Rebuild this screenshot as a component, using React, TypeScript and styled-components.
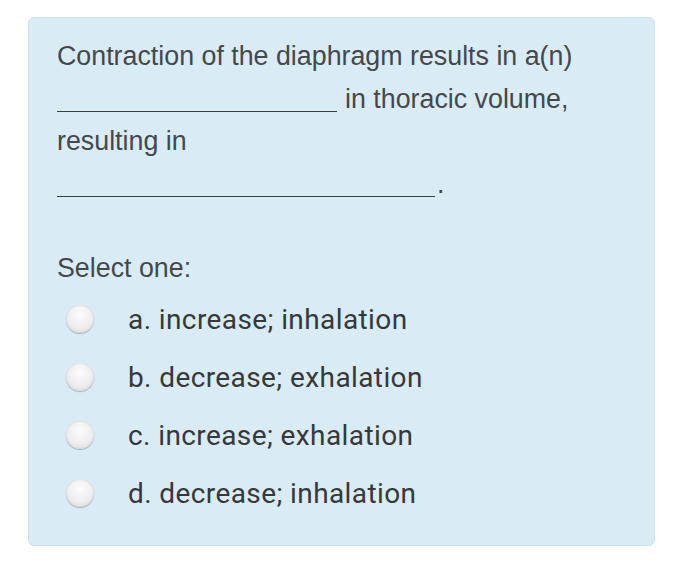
import * as React from "react";
import styled, { createGlobalStyle } from "styled-components";

const GlobalStyle = createGlobalStyle`
  html, body {
    margin: 0;
    padding: 0;
    background: #ffffff;
  }
  body {
    font-family: "Liberation Sans", Arial, sans-serif;
  }
`;

const Page = styled.div`
  width: 700px;
  height: 575px;
  padding: 17px 45px 0 28px;
  box-sizing: border-box;
`;

const Card = styled.div`
  width: 627px;
  height: 529px;
  box-sizing: border-box;
  background: #d9ecf5;
  border: 1px solid #c8e3ee;
  border-radius: 6px;
  padding: 17px 28px 0 28px;
  color: #45484b;
`;

const QuestionText = styled.div`
  font-size: 26.8px;
  line-height: 42.5px;
  white-space: nowrap;
`;

const Blank = styled.span<{ width: number }>`
  display: inline-block;
  width: ${p => p.width}px;
  border-bottom: 1.5px solid #3b3d3f;
  height: 1px;
  vertical-align: -4px;
  margin-right: ${p => (p.width > 300 ? 2 : 8)}px;
`;

const Prompt = styled.div`
  margin-top: 42px;
  font-size: 26.8px;
  line-height: 42px;
`;

const Options = styled.div`
  display: flex;
  flex-direction: column;
  margin-top: 1px;
`;

const Option = styled.label`
  display: flex;
  align-items: center;
  height: 58px;
  padding-left: 9px;
  font-family: Roboto, "Liberation Sans", sans-serif;
  font-size: 28px;
  letter-spacing: 0.4px;
  color: #36383a;
`;

const Radio = styled.span`
  width: 28px;
  height: 28px;
  border-radius: 50%;
  background: radial-gradient(circle at 50% 35%, #fbfbfb 0%, #eeeeee 55%, #d8d8d8 100%);
  box-shadow: 0 1px 1px rgba(0, 0, 0, 0.25), inset 0 0 0 1px rgba(0, 0, 0, 0.06);
  margin-right: 34px;
  flex-shrink: 0;
`;

const options = [
  "a. increase; inhalation",
  "b. decrease; exhalation",
  "c. increase; exhalation",
  "d. decrease; inhalation"
];

const App: React.FC = () => (
  <Page>
    <GlobalStyle />
    <Card>
      <QuestionText>
        Contraction of the diaphragm results in a(n)
        <br />
        <Blank width={280} />
        in thoracic volume,
        <br />
        resulting in
        <br />
        <Blank width={378} />.
      </QuestionText>
      <Prompt>Select one:</Prompt>
      <Options>
        {options.map(o => (
          <Option key={o}>
            <Radio />
            {o}
          </Option>
        ))}
      </Options>
    </Card>
  </Page>
);

export default App;
